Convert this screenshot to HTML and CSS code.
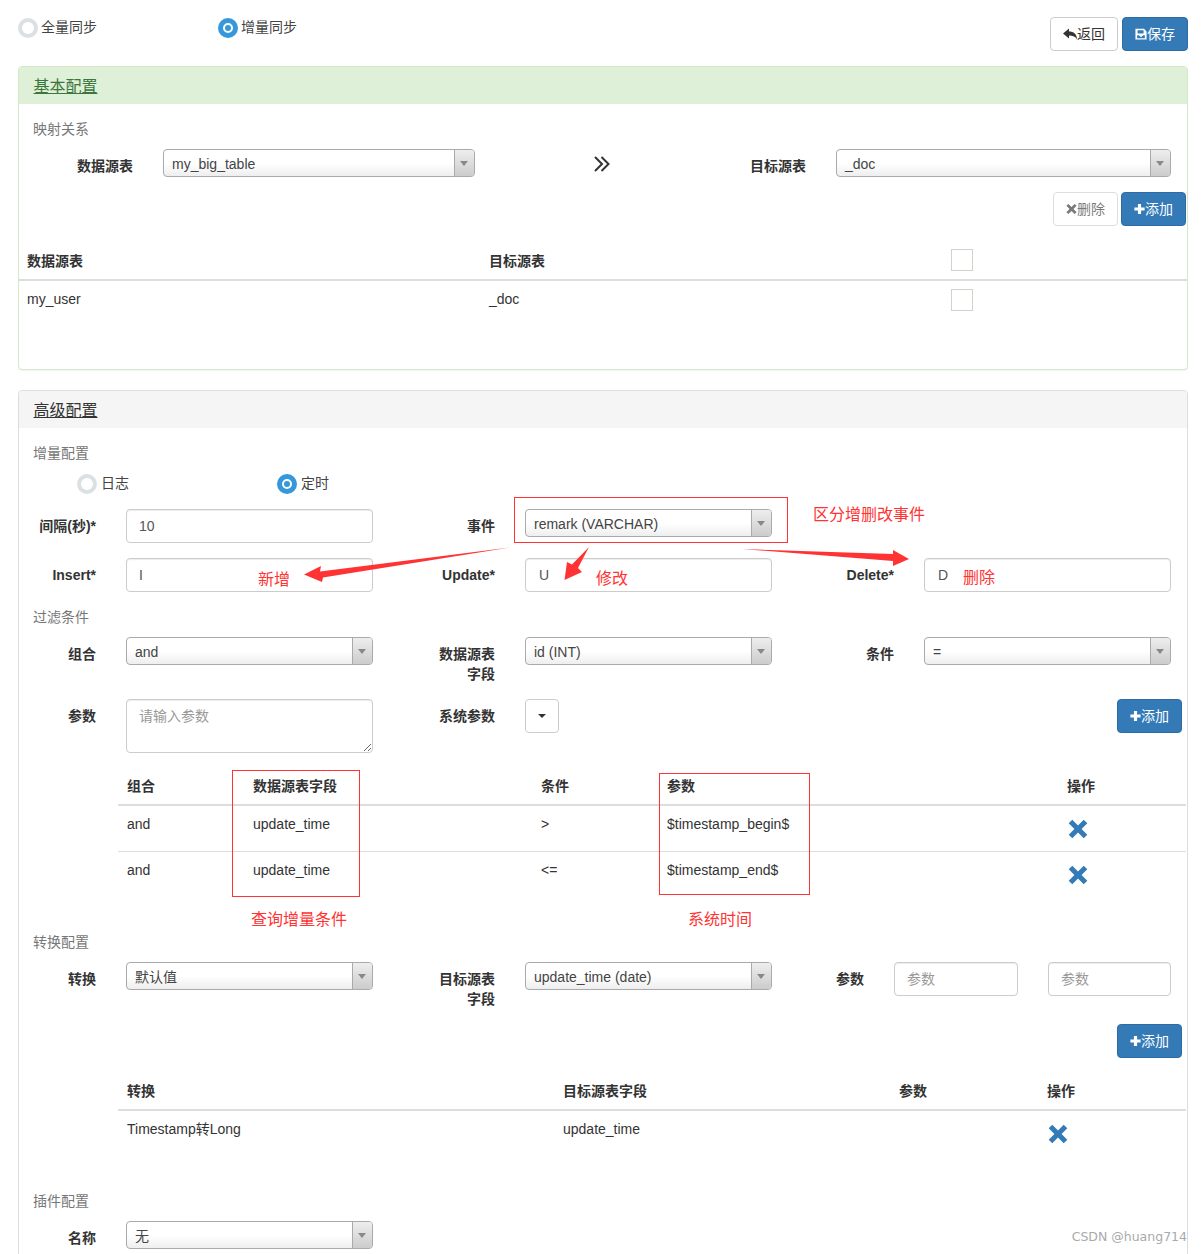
FILE: index.html
```html
<!DOCTYPE html>
<html lang="zh-CN">
<head>
<meta charset="utf-8">
<title>同步配置</title>
<link rel="stylesheet" href="styles.css">
</head>
<body>
<svg class="sprite" xmlns="http://www.w3.org/2000/svg">
  <symbol id="i-reply" viewBox="0 0 14 14"><path d="M0 6.5 6 1.5V4.5C10.5 4.500 14 7 14 12.500 12.500 9.500 10 8.500 6 8.500V11.500Z"/></symbol>
  <symbol id="i-save" viewBox="0 0 14 14"><path fill-rule="evenodd" d="M0.500 1H10.500L13.500 4V13.500H0.500ZM3 2.500V6.500H10V2.500ZM2.500 8.500V12H11.500V8.500H9.500L7 10.800 4.500 8.500Z"/></symbol>
  <symbol id="i-remove" viewBox="0 0 14 14"><path d="M3 .5 7 4.500 11 .5 13.500 3 9.500 7 13.500 11 11 13.500 7 9.500 3 13.500 .5 11 4.500 7 .5 3Z"/></symbol>
  <symbol id="i-plus" viewBox="0 0 14 14"><path d="M5 .5H9V5H13.500V9H9V13.500H5V9H.5V5H5Z"/></symbol>
</svg>

<div class="page">
  <div class="top">
    <div class="radios">
      <label class="radio-item"><span class="radio"></span>全量同步</label>
      <label class="radio-item"><span class="radio on"></span>增量同步</label>
    </div>
    <div class="actions">
      <button class="btn"><svg class="ic ic-back"><use href="#i-reply"/></svg>返回</button>
      <button class="btn primary"><svg class="ic ic-save"><use href="#i-save"/></svg>保存</button>
    </div>
  </div>

  <section class="panel green">
    <h3 class="panel-head"><a href="#">基本配置</a></h3>
    <div class="panel-body">
      <div class="legend">映射关系</div>
      <div class="map-row">
        <label class="lbl">数据源表</label>
        <div class="sel"><span>my_big_table</span><i class="arr"></i></div>
        <div class="chev"><svg width="18" height="18" viewBox="0 0 18 18"><path d="M2 2l7 7-7 7M8.500 2l7 7-7 7" fill="none" stroke="#333" stroke-width="2"/></svg></div>
        <label class="lbl">目标源表</label>
        <div class="sel"><span>_doc</span><i class="arr"></i></div>
      </div>
      <div class="map-actions">
        <button class="btn disabled"><svg class="ic"><use href="#i-remove"/></svg>删除</button>
        <button class="btn primary"><svg class="ic"><use href="#i-plus"/></svg>添加</button>
      </div>
      <table class="tbl tbl-map">
        <thead><tr><th>数据源表</th><th>目标源表</th><th><span class="check"></span></th></tr></thead>
        <tbody><tr><td>my_user</td><td>_doc</td><td><span class="check"></span></td></tr></tbody>
      </table>
    </div>
  </section>

  <section class="panel plain">
    <h3 class="panel-head"><a href="#">高级配置</a></h3>
    <div class="panel-body">
      <div class="legend">增量配置</div>
      <div class="radios inner">
        <label class="radio-item"><span class="radio"></span>日志</label>
        <label class="radio-item"><span class="radio on"></span>定时</label>
      </div>
      <div class="form form-inc">
        <label class="lbl">间隔(秒)*</label>
        <input class="inp" value="10">
        <label class="lbl wide">事件</label>
        <div class="sel"><span>remark (VARCHAR)</span><i class="arr"></i></div>
        <div></div><div></div>
        <label class="lbl">Insert*</label>
        <input class="inp" value="I">
        <label class="lbl wide">Update*</label>
        <input class="inp" value="U">
        <label class="lbl wide">Delete*</label>
        <input class="inp" value="D">
      </div>

      <div class="legend gap15">过滤条件</div>
      <div class="form form-filter">
        <label class="lbl">组合</label>
        <div class="sel"><span>and</span><i class="arr"></i></div>
        <label class="lbl wide">数据源表<br>字段</label>
        <div class="sel"><span>id (INT)</span><i class="arr"></i></div>
        <label class="lbl wide">条件</label>
        <div class="sel"><span>=</span><i class="arr"></i></div>
        <label class="lbl">参数</label>
        <textarea class="inp area" placeholder="请输入参数"></textarea>
        <label class="lbl wide">系统参数</label>
        <div><button class="btn drop"><i class="caret"></i></button></div>
        <div></div>
        <div class="add-cell"><button class="btn primary"><svg class="ic"><use href="#i-plus"/></svg>添加</button></div>
      </div>

      <table class="tbl tbl-sub tbl-filter">
        <thead><tr><th>组合</th><th>数据源表字段</th><th>条件</th><th>参数</th><th>操作</th></tr></thead>
        <tbody>
          <tr><td>and</td><td>update_time</td><td>&gt;</td><td>$timestamp_begin$</td><td><svg class="del"><use href="#i-remove"/></svg></td></tr>
          <tr><td>and</td><td>update_time</td><td>&lt;=</td><td>$timestamp_end$</td><td><svg class="del"><use href="#i-remove"/></svg></td></tr>
        </tbody>
      </table>

      <div class="legend after-table">转换配置</div>
      <div class="form form-conv">
        <label class="lbl">转换</label>
        <div class="sel"><span>默认值</span><i class="arr"></i></div>
        <label class="lbl wide">目标源表<br>字段</label>
        <div class="sel"><span>update_time (date)</span><i class="arr"></i></div>
        <div class="conv-args">
          <label class="lbl">参数</label>
          <input class="inp" placeholder="参数">
          <input class="inp" placeholder="参数">
        </div>
      </div>
      <div class="add-row"><button class="btn primary"><svg class="ic"><use href="#i-plus"/></svg>添加</button></div>
      <table class="tbl tbl-sub tbl-conv">
        <thead><tr><th>转换</th><th>目标源表字段</th><th>参数</th><th>操作</th></tr></thead>
        <tbody><tr><td>Timestamp转Long</td><td>update_time</td><td></td><td><svg class="del"><use href="#i-remove"/></svg></td></tr></tbody>
      </table>

      <div class="legend after-table">插件配置</div>
      <div class="form form-plugin">
        <label class="lbl">名称</label>
        <div class="sel"><span>无</span><i class="arr"></i></div>
      </div>
    </div>
  </section>

  <div class="mark m-event"></div>
  <div class="mark m-field"></div>
  <div class="mark m-param"></div>
  <span class="note n-event">区分增删改事件</span>
  <span class="note n-ins">新增</span>
  <span class="note n-upd">修改</span>
  <span class="note n-del">删除</span>
  <span class="note n-field">查询增量条件</span>
  <span class="note n-time">系统时间</span>
  <svg class="arrows" width="1201" height="1254" viewBox="0 0 1201 1254">
    <polygon points="513,547 320,571.500 321,566 304,574.500 322,582 323,577.500"/>
    <polygon points="589,547 572,564.500 567,562 564.500,580 582,572 578,568"/>
    <polygon points="742,549 893,554 893,550 909,559 893,566 893,561"/>
  </svg>
  <span class="watermark">CSDN @huang714</span>
</div>
</body>
</html>
```

FILE: styles.css
```css
* { box-sizing: border-box; }
html, body { margin: 0; padding: 0; }
body {
  font: 14px/20px "Liberation Sans", "Noto Sans CJK SC", sans-serif;
  color: #333;
  background: #fff;
  overflow: hidden;
}
.sprite { display: none; }
.page {
  position: relative;
  height: 1254px;
  overflow: hidden;
  padding: 0 13px 0 18px;
}

/* top bar */
.top { display: flex; justify-content: space-between; height: 66px; }
.radios { display: flex; padding-top: 18px; }
.radio-item { display: flex; align-items: center; gap: 3px; width: 200px; height: 20px; padding-bottom: 2px; color: #444; }
.radio {
  position: relative;
  flex: none;
  align-self: flex-start;
  width: 20px;
  height: 20px;
  border: 4px solid #dbe1e3;
  border-radius: 50%;
  background: #fff;
}
.radio.on { border: 5px solid #3498db; }
.radio.on::after {
  content: "";
  position: absolute;
  left: 2px;
  top: 2px;
  width: 6px;
  height: 6px;
  border-radius: 50%;
  background: #3498db;
}
.actions { display: flex; gap: 4px; padding-top: 17px; align-items: flex-start; }

/* buttons */
.btn {
  display: inline-flex;
  align-items: center;
  height: 34px;
  padding: 6px 12px;
  font: inherit;
  color: #333;
  background: #fff;
  border: 1px solid #ccc;
  border-radius: 4px;
}
.btn.primary { color: #fff; background: #337ab7; border-color: #2e6da4; }
.btn.disabled { opacity: .65; }
.ic { width: 11px; height: 14px; fill: currentColor; flex: none; }
.ic-back { width: 14px; }
.ic-save { width: 12px; }
.btn.drop { width: 34px; justify-content: center; padding: 0; }
.caret { width: 0; height: 0; border: 4px solid transparent; border-top-color: #333; border-bottom: 0; }

/* panels */
.panel {
  margin-bottom: 20px;
  border: 1px solid #ddd;
  border-radius: 4px;
  box-shadow: 0 1px 1px rgba(0, 0, 0, .05);
  background: #fff;
}
.panel-head {
  margin: 0;
  height: 37px;
  padding: 10px 15px 0 14.5px;
  font-size: 16px;
  font-weight: 400;
  line-height: 20px;
  border-radius: 3px 3px 0 0;
}
.panel-head a { color: inherit; text-decoration: underline; }
.panel.green { border-color: #d6e9c6; height: 304px; }
.green .panel-head { background: #dff0d8; color: #3c763d; }
.plain .panel-head { background: #f5f5f5; color: #333; }
.panel-body { padding: 15px 16px 15px 15px; }
.legend { color: #777; height: 20px; margin-left: -1px; }
.gap15 { margin-top: 15px; }
.after-table { margin-top: 35px; }

.lbl { font-weight: 700; text-align: right; padding-top: 7px; color: #333; }

/* select */
.sel {
  position: relative;
  height: 28px;
  padding: 0 30px 0 8px;
  line-height: 28px;
  color: #444;
  border: 1px solid #aaa;
  border-radius: 4px;
  background: linear-gradient(#fff 50%, #eee);
}
.arr {
  position: absolute;
  top: 0;
  right: 0;
  bottom: 0;
  width: 20px;
  border-left: 1px solid #aaa;
  border-radius: 0 3px 3px 0;
  background: linear-gradient(#eee, #ccc);
}
.arr::after {
  content: "";
  position: absolute;
  left: 5px;
  top: 11px;
  border: 4px solid transparent;
  border-top: 5px solid #888;
  border-bottom: 0;
}

/* inputs */
.inp {
  display: block;
  width: 100%;
  height: 34px;
  padding: 6px 12px;
  font: inherit;
  color: #555;
  background: #fff;
  border: 1px solid #ccc;
  border-radius: 4px;
  box-shadow: inset 0 1px 1px rgba(0, 0, 0, .075);
}
.wide + .inp { padding-left: 13px; }
.inp::placeholder { color: #999; opacity: 1; }
.area { height: 54px; resize: vertical; }

/* mapping */
.map-row {
  display: grid;
  grid-template-columns: 99px 312px 1fr 56px 335px;
  column-gap: 30px;
  margin-top: 10px;
  height: 28px;
}
.chev { display: flex; justify-content: center; padding: 6px 22px 0 0; }
.map-actions {
  display: flex;
  justify-content: flex-end;
  gap: 3px;
  margin: 15px -15px 0 0;
}

/* tables */
.tbl { border-collapse: collapse; table-layout: fixed; }
.tbl th, .tbl td { padding: 8px; text-align: left; vertical-align: top; }
.tbl th { border-bottom: 2px solid #ddd; font-weight: 700; }
.tbl-sub th, .tbl-sub td { padding-left: 9px; }
.tbl-sub td { height: 46px; }
.tbl-sub tr + tr td { border-top: 1px solid #ddd; }
.tbl-map { width: 1168px; margin: 15px 0 0 -15px; }
.tbl-map th { height: 39px; padding-top: 10px; }
.tbl-map th:nth-child(1), .tbl-map th:nth-child(2) { width: 462px; }
.check {
  display: block;
  width: 22px;
  height: 22px;
  border: 1px solid #d5d0cc;
  background: #fff;
}
.tbl-map th .check { margin-top: -2px; }
.tbl-sub { width: 1068px; margin: 15px -15px 0 84px; }
.tbl-filter th:nth-child(1) { width: 126px; }
.tbl-filter th:nth-child(2) { width: 288px; }
.tbl-filter th:nth-child(3) { width: 126px; }
.tbl-filter th:nth-child(4) { width: 400px; }
.tbl-conv th:nth-child(1) { width: 436px; }
.tbl-conv th:nth-child(2) { width: 336px; }
.tbl-conv th:nth-child(3) { width: 148px; }
.del { display: block; width: 20px; height: 20px; margin: 5px 0 0 1px; fill: #337ab7; }

/* form grid */
.form {
  display: grid;
  grid-template-columns: 62px 247px 92px 247px 92px 247px;
  column-gap: 30px;
  align-items: start;
}
.form-inc { margin-top: 15px; row-gap: 15px; }
.form-filter { margin-top: 10px; row-gap: 15px; }
.form-conv, .form-plugin { margin-top: 10px; }
.add-cell { display: flex; justify-content: flex-end; margin-right: -11px; }
.conv-args {
  grid-column: 5 / 7;
  display: grid;
  grid-template-columns: 62px 124px 123px;
  column-gap: 30px;
}
.add-row { display: flex; justify-content: flex-end; margin: 15px -11px 0 0; }
.radios.inner { padding: 11px 0 0 43px; }
.inner .radio-item { gap: 4px; }

/* annotations */
.mark { position: absolute; border: 1px solid #f33; }
.m-event { left: 514px; top: 497px; width: 274px; height: 46px; }
.m-field { left: 232px; top: 770px; width: 128px; height: 127px; }
.m-param { left: 659px; top: 773px; width: 151px; height: 122px; }
.note { position: absolute; font-size: 16px; line-height: 22px; color: #f33; white-space: nowrap; }
.n-event { left: 813px; top: 504px; }
.n-ins { left: 258px; top: 569px; }
.n-upd { left: 596px; top: 568px; }
.n-del { left: 963px; top: 567px; }
.n-field { left: 251px; top: 909px; }
.n-time { left: 688px; top: 909px; }
.arrows { position: absolute; left: 0; top: 0; fill: #f33; pointer-events: none; }
.watermark {
  position: absolute;
  right: 14px;
  top: 1227px;
  font-family: "DejaVu Sans", sans-serif;
  font-size: 12.500px;
  color: #aaa;
  white-space: nowrap;
}
```
